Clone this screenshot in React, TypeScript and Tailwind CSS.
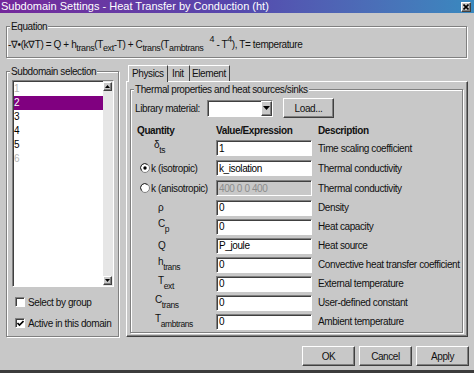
const bevelOut =
  'border border-t-white border-l-white border-r-[#404040] border-b-[#404040] shadow-[inset_-1px_-1px_0_#808080]';
const bevelIn =
  'border border-t-[#808080] border-l-[#808080] border-r-white border-b-white shadow-[inset_1px_1px_0_#404040]';

function Group({ label, className = '', children }: { label: string; className?: string; children?: React.ReactNode }) {
  return (
    <div className={`relative border border-[#808080] shadow-[1px_1px_0_#fff,inset_1px_1px_0_#fff] ${className}`}>
      <span className="absolute -top-[7px] left-[3px] whitespace-nowrap bg-[#c8c8c8] px-[1px] leading-[13px]">{label}</span>
      {children}
    </div>
  );
}

function Field({ value, disabled = false }: { value: string; disabled?: boolean }) {
  return (
    <div
      className={`flex h-[16px] w-[96px] shrink-0 items-center pl-[2px] leading-[13px] ${bevelIn} ${
        disabled ? 'bg-[#c8c8c8] text-[#8c8c8c]' : 'bg-white text-black'
      }`}
    >
      {value}
    </div>
  );
}

function Radio({ on }: { on?: boolean }) {
  return (
    <svg width="10" height="10" viewBox="0 0 10 10" className="shrink-0">
      <circle cx="5" cy="5" r="4.5" fill="#fff" stroke="#808080" />
      <path d="M1.8 7.6A4 4 0 0 1 7.6 1.8" fill="none" stroke="#303030" />
      {on && <circle cx="5" cy="5" r="1.7" fill="#000" />}
    </svg>
  );
}

function Check({ on }: { on?: boolean }) {
  return (
    <div className={`flex h-[10px] w-[10px] shrink-0 items-center justify-center bg-white ${bevelIn}`}>
      {on && (
        <svg width="7" height="7" viewBox="0 0 7 7">
          <path d="M0.5 3L2.5 5L6.5 1" fill="none" stroke="#000" strokeWidth="1.6" />
        </svg>
      )}
    </div>
  );
}

function Sym({ base, sub, pl }: { base: string; sub?: string; pl: string }) {
  return (
    <div className={`w-[85px] min-w-0 shrink-0 whitespace-nowrap ${pl}`}>
      <span className={sub ? 'relative -top-[3px]' : ''}>{base}</span>
      {sub && <span className="relative top-[2px] text-[8.5px]">{sub}</span>}
    </div>
  );
}

const rows = [
  { base: 'δ', sub: 'ts', pl: 'pl-[23px]', value: '1', desc: 'Time scaling coefficient', h: 'h-[20px]' },
  { radio: true, on: true, label: 'k (isotropic)', value: 'k_isolation', desc: 'Thermal conductivity', h: 'h-[20px]' },
  { radio: true, label: 'k (anisotropic)', value: '400 0 0 400', disabled: true, desc: 'Thermal conductivity', h: 'h-[20px]' },
  { base: 'ρ', pl: 'pl-[27px]', value: '0', desc: 'Density', h: 'h-[19px]' },
  { base: 'C', sub: 'p', pl: 'pl-[27px]', value: '0', desc: 'Heat capacity', h: 'h-[19px]' },
  { base: 'Q', pl: 'pl-[27px]', value: 'P_joule', desc: 'Heat source', h: 'h-[19px]' },
  { base: 'h', sub: 'trans', pl: 'pl-[27px]', value: '0', desc: 'Convective heat transfer coefficient', h: 'h-[19px]' },
  { base: 'T', sub: 'ext', pl: 'pl-[27px]', value: '0', desc: 'External temperature', h: 'h-[19px]' },
  { base: 'C', sub: 'trans', pl: 'pl-[24px]', value: '0', desc: 'User-defined constant', h: 'h-[19px]' },
  { base: 'T', sub: 'ambtrans', pl: 'pl-[24px]', value: '0', desc: 'Ambient temperature', h: 'h-[19px]' },
];

const items = [
  { n: '1', dim: true },
  { n: '2', sel: true },
  { n: '3' },
  { n: '4' },
  { n: '5' },
  { n: '6', dim: true },
];

export default function App() {
  return (
    <div className="flex h-[373px] w-[474px] flex-col overflow-hidden bg-[#c8c8c8] font-['Liberation_Sans',Arial,sans-serif] text-[10px] leading-[13px] tracking-[-0.4px] text-[#111]">
      {/* Title bar */}
      <div className="flex h-[13px] shrink-0 items-start justify-between bg-linear-to-r from-[#74279b] via-[#5548ad] to-[#3889bf] pr-[3px]">
        <span className="pl-[1px] text-[11px] leading-[12px] tracking-normal text-white">
          Subdomain Settings - Heat Transfer by Conduction (ht)
        </span>
        <div className={`mt-[2px] flex h-[10px] w-[10px] items-center justify-center bg-[#c8c8c8] ${bevelOut}`}>
          <svg width="6" height="6" viewBox="0 0 6 6">
            <path d="M0.5 0.5L5.5 5.5M5.5 0.5L0.5 5.5" stroke="#000" strokeWidth="1.6" />
          </svg>
        </div>
      </div>

      {/* Equation */}
      <Group label="Equation" className="ml-[6px] mt-[13px] h-[32px] w-[461px] shrink-0">
        <div className="whitespace-nowrap pl-[1px] pt-[11px]">
          -∇•(k∇T) = Q + h<span className="relative top-[3px] text-[9px]">trans</span>(T
          <span className="relative top-[3px] text-[9px]">ext</span>-T) + C
          <span className="relative top-[3px] text-[9px]">trans</span>(T
          <span className="relative top-[3px] text-[9px]">ambtrans</span>
          <span className="relative -top-[6px] pl-[6px] text-[9px]">4</span> - T
          <span className="relative -top-[6px] text-[9px]">4</span>), T= temperature
        </div>
      </Group>

      {/* Main */}
      <div className="mt-[6px] flex h-[273px] shrink-0">
        <Group label="Subdomain selection" className="ml-[6px] mt-[7px] h-[266px] w-[113px] shrink-0">
          <div className="pl-[5px] pt-[8px]">
            <div className={`flex h-[207px] w-[102px] bg-white ${bevelIn}`}>
              <div className="flex-1 pl-[1px] pt-[1px]">
                {items.map((it) => (
                  <div
                    key={it.n}
                    className={`h-[14px] leading-[14px] ${
                      it.sel ? 'bg-[#800080] text-white' : it.dim ? 'text-[#b4b4b4]' : 'text-black'
                    }`}
                  >
                    {it.n}
                  </div>
                ))}
              </div>
              <div className="flex w-[10px] flex-col justify-between bg-[#e6e6e6] py-[1px] pr-[1px]">
                <div className={`flex h-[9px] w-[9px] items-center justify-center bg-[#c8c8c8] ${bevelOut}`}>
                  <svg width="5" height="3" viewBox="0 0 5 3">
                    <path d="M2.5 0L5 3H0Z" fill="#000" />
                  </svg>
                </div>
                <div className={`flex h-[9px] w-[9px] items-center justify-center bg-[#c8c8c8] ${bevelOut}`}>
                  <svg width="5" height="3" viewBox="0 0 5 3">
                    <path d="M0 0H5L2.5 3Z" fill="#000" />
                  </svg>
                </div>
              </div>
            </div>
            <div className="mt-[8px] flex h-[14px] items-center gap-[3px] whitespace-nowrap pl-[3px]">
              <Check />
              <span>Select by group</span>
            </div>
            <div className="mt-[7px] flex h-[14px] items-center gap-[3px] whitespace-nowrap pl-[3px]">
              <Check on />
              <span>Active in this domain</span>
            </div>
          </div>
        </Group>

        {/* Tabs */}
        <div className="ml-[7px] flex w-[342px] shrink-0 flex-col">
          <div className="mt-[1px] flex h-[16px] items-end pl-[2px]">
            <div className="relative z-10 -mb-px flex h-[17px] w-[40px] items-start border-l border-r border-t border-l-white border-r-[#404040] border-t-white bg-[#c8c8c8] pl-[3px] pt-[1px]">
              Physics
            </div>
            <div className="flex h-[16px] w-[22px] items-start border-r border-t border-r-[#404040] border-t-white pl-[4px] pt-[1px]">
              Init
            </div>
            <div className="flex h-[16px] w-[40px] items-start border-r border-t border-r-[#404040] border-t-white pl-[2px] pt-[1px]">
              Element
            </div>
          </div>
          <div className="h-[256px] border border-b-[#404040] border-l-white border-r-[#404040] border-t-white shadow-[inset_-1px_-1px_0_#808080]">
            <Group label="Thermal properties and heat sources/sinks" className="ml-[3px] mt-[7px] h-[244px] w-[333px]">
              <div className="mt-[8px] flex h-[20px] items-center whitespace-nowrap pl-[4px]">
                <span className="w-[72px]">Library material:</span>
                <div className={`flex h-[17px] w-[66px] justify-end bg-white ${bevelIn}`}>
                  <div className={`flex h-[15px] w-[11px] items-center justify-center bg-[#c8c8c8] ${bevelOut}`}>
                    <svg width="7" height="4" viewBox="0 0 7 4">
                      <path d="M0 0H7L3.5 4Z" fill="#000" />
                    </svg>
                  </div>
                </div>
                <div className={`ml-[10px] flex h-[20px] w-[51px] items-center justify-center ${bevelOut}`}>Load...</div>
              </div>

              <div className="mt-[6px] flex h-[13px] items-center whitespace-nowrap font-bold">
                <span className="w-[85px] pl-[6px]">Quantity</span>
                <span className="w-[102px]">Value/Expression</span>
                <span>Description</span>
              </div>

              <div className="mt-[1px] flex flex-col">
                {rows.map((r, i) => (
                  <div key={i} className={`flex items-center ${r.h}`}>
                    {r.radio ? (
                      <div className="flex w-[85px] shrink-0 items-center gap-[1px] whitespace-nowrap pl-[9px]">
                        <Radio on={r.on} />
                        <span>{r.label}</span>
                      </div>
                    ) : (
                      <Sym base={r.base!} sub={r.sub} pl={r.pl!} />
                    )}
                    <Field value={r.value} disabled={r.disabled} />
                    <span className="ml-[6px] whitespace-nowrap">{r.desc}</span>
                  </div>
                ))}
              </div>
            </Group>
          </div>
        </div>
      </div>

      {/* Buttons */}
      <div className="mt-[9px] flex h-[20px] shrink-0 justify-end gap-[4px] pr-[5px]">
        <div className={`flex w-[53px] items-center justify-center ${bevelOut}`}>OK</div>
        <div className={`flex w-[53px] items-center justify-center ${bevelOut}`}>Cancel</div>
        <div className={`flex w-[53px] items-center justify-center ${bevelOut}`}>Apply</div>
      </div>
      <div className="mt-[4px] h-[3px] shrink-0 bg-[#3c3c3c]" />
    </div>
  );
}
